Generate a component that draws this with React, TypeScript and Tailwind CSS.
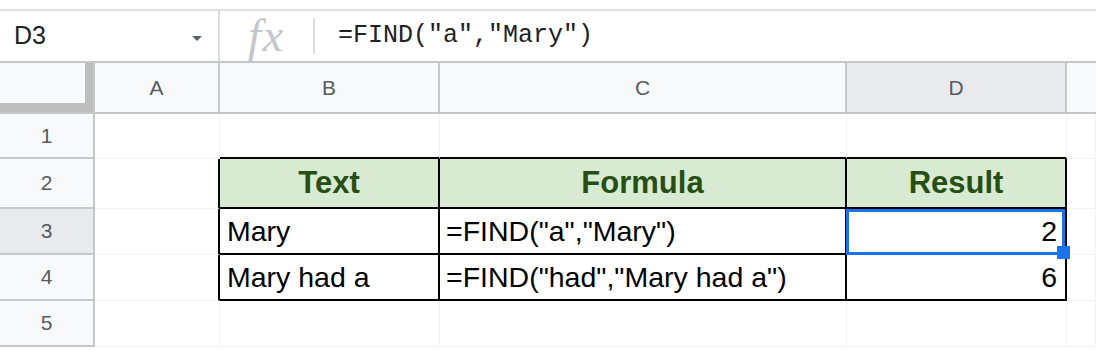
import React from 'react';

type CellProps = {
  className?: string;
  children?: React.ReactNode;
};

const Cell: React.FC<CellProps> = ({ className = '', children }) => (
  <div className={`relative flex items-center min-w-0 ${className}`}>{children}</div>
);

// header cells of the sheet (letters / row numbers)
const colHead = 'justify-center bg-[#f8f9fa] border-r-2 border-b-2 border-[#c4c7c5] text-[21px] text-[#575a5e]';
const rowHead = 'justify-center bg-[#f8f9fa] border-r-2 border-b-2 border-[#c4c7c5] text-[21px] text-[#575a5e]';
const blank = 'border-r border-b border-[#f2f2f2]';
const green = 'justify-center bg-[#d9ead3] border-r-2 border-b-2 border-black text-[31px] font-bold text-[#274e13]';
const body = 'border-r-2 border-b-2 border-black text-[28.5px] text-black';

export default function App() {
  return (
    <div className="w-[1096px] h-[350px] overflow-hidden bg-white font-['Liberation_Sans',Arial,sans-serif]">
      {/* top toolbar edge */}
      <div className="h-[11px] border-b-2 border-[#e0e0e0]" />

      {/* formula bar */}
      <div className="flex h-[52px] border-b-2 border-[#c4c7c5]">
        <div className="flex w-[220px] items-center border-r-2 border-[#dadce0] pl-[14px] pr-[16px]">
          <span className="text-[25px] text-[#202124]">D3</span>
          <span className="ml-auto mt-[4px] h-0 w-0 border-x-[5px] border-t-[5px] border-x-transparent border-t-[#5f6368]" />
        </div>
        <div className="flex w-[93px] items-center justify-center">
          <span className="font-['Liberation_Serif',serif] text-[46px] italic leading-none tracking-[2px] text-[#c4c6c9]">fx</span>
        </div>
        <div className="w-[2px] h-[36px] self-center bg-[#dadce0]" />
        <div className="flex items-center pl-[23px] font-['Liberation_Mono',monospace] text-[25px] text-[#202124]">
          =FIND("a","Mary")
        </div>
      </div>

      {/* grid */}
      <div className="grid grid-cols-[95px_125px_220px_407px_220px_1fr] grid-rows-[51px_45px_50px_46px_46px_46px_1fr]">
        {/* column headers */}
        <Cell className="items-stretch bg-[#f8f9fa] border-r-2 border-b-2 border-[#c4c7c5]">
          <div className="flex-1 border-r-[8px] border-b-[9px] border-[#bdbdbd]" />
        </Cell>
        <Cell className={colHead}>A</Cell>
        <Cell className={colHead}>B</Cell>
        <Cell className={colHead}>C</Cell>
        <Cell className={`${colHead} !bg-[#e8eaed]`}>D</Cell>
        <Cell className="bg-[#f8f9fa] border-b-2 border-[#c4c7c5]" />

        {/* row 1 */}
        <Cell className={rowHead}>1</Cell>
        <Cell className={blank} />
        <Cell className="border-r border-b-2 border-r-[#f2f2f2] border-b-black" />
        <Cell className="border-r border-b-2 border-r-[#f2f2f2] border-b-black" />
        <Cell className="border-r border-b-2 border-r-[#f2f2f2] border-b-black" />
        <Cell className={blank} />

        {/* row 2 */}
        <Cell className={rowHead}>2</Cell>
        <Cell className="border-r-2 border-b border-r-black border-b-[#f2f2f2]" />
        <Cell className={green}>Text</Cell>
        <Cell className={green}>Formula</Cell>
        <Cell className={green}>Result</Cell>
        <Cell className={blank} />

        {/* row 3 */}
        <Cell className={`${rowHead} !bg-[#e8eaed]`}>3</Cell>
        <Cell className="border-r-2 border-b border-r-black border-b-[#f2f2f2]" />
        <Cell className={`${body} pl-[7px]`}>Mary</Cell>
        <Cell className={`${body} pl-[6px]`}>=FIND("a","Mary")</Cell>
        <Cell className={`${body} z-10 justify-end pr-[8px]`}>
          2
          <div className="absolute -left-px top-0 right-0 -bottom-[2px] border-[3px] border-[#1a73e8]" />
          <div className="absolute -right-[5px] -bottom-[6px] h-[13px] w-[13px] bg-[#1a73e8]" />
        </Cell>
        <Cell className={blank} />

        {/* row 4 */}
        <Cell className={rowHead}>4</Cell>
        <Cell className="border-r-2 border-b border-r-black border-b-[#f2f2f2]" />
        <Cell className={`${body} pl-[7px]`}>Mary had a</Cell>
        <Cell className={`${body} pl-[6px]`}>=FIND("had","Mary had a")</Cell>
        <Cell className={`${body} justify-end pr-[8px]`}>6</Cell>
        <Cell className={blank} />

        {/* row 5 */}
        <Cell className={rowHead}>5</Cell>
        <Cell className={blank} />
        <Cell className={blank} />
        <Cell className={blank} />
        <Cell className={blank} />
        <Cell className={blank} />

        {/* row 6 (cut off) */}
        <Cell className="bg-[#f8f9fa] border-r-2 border-[#c4c7c5]" />
        <Cell className="border-r border-[#f2f2f2]" />
        <Cell className="border-r border-[#f2f2f2]" />
        <Cell className="border-r border-[#f2f2f2]" />
        <Cell className="border-r border-[#f2f2f2]" />
        <Cell />
      </div>
    </div>
  );
}
